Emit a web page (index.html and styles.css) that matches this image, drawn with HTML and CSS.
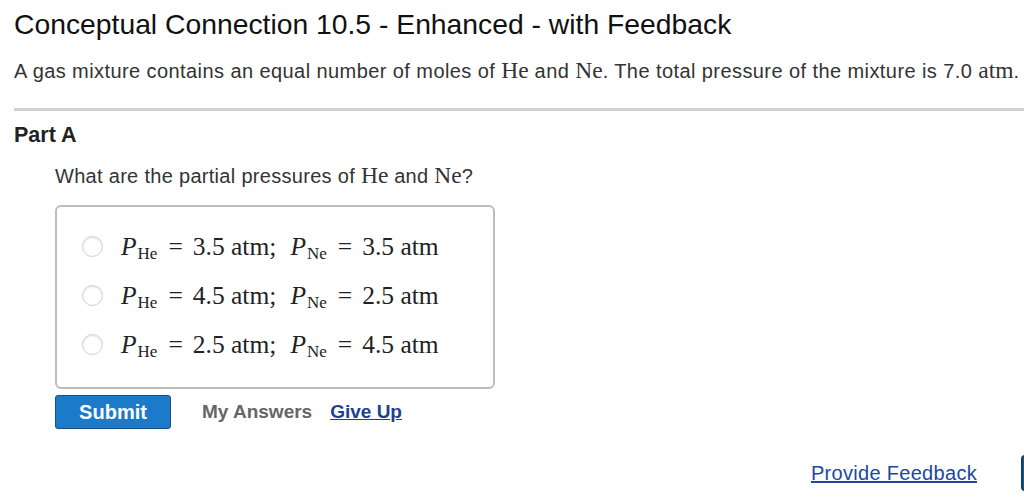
FILE: index.html
```html
<!DOCTYPE html>
<html>
<head>
<meta charset="utf-8">
<link rel="stylesheet" href="styles.css">
</head>
<body>
<div class="page">
  <h1 class="title">Conceptual Connection 10.5 - Enhanced - with Feedback</h1>
  <p class="intro">A gas mixture contains an equal number of moles of <span class="m">He</span> and <span class="m">Ne</span>. The total pressure of the mixture is 7.0 <span class="m">atm</span>.</p>
  <hr class="rule">
  <h2 class="part">Part A</h2>
  <div class="question">
    <p class="prompt">What are the partial pressures of <span class="m">He</span> and <span class="m">Ne</span>?</p>
    <div class="choices">
      <label class="choice"><span class="radio"></span><span class="eq"><i>P</i><sub>He</sub><span class="op">=</span>3.5 atm;<span class="sp"></span><i>P</i><sub>Ne</sub><span class="op">=</span>3.5 atm</span></label>
      <label class="choice"><span class="radio"></span><span class="eq"><i>P</i><sub>He</sub><span class="op">=</span>4.5 atm;<span class="sp"></span><i>P</i><sub>Ne</sub><span class="op">=</span>2.5 atm</span></label>
      <label class="choice"><span class="radio"></span><span class="eq"><i>P</i><sub>He</sub><span class="op">=</span>2.5 atm;<span class="sp"></span><i>P</i><sub>Ne</sub><span class="op">=</span>4.5 atm</span></label>
    </div>
    <div class="actions">
      <button class="submit">Submit</button>
      <span class="my-answers">My Answers</span>
      <a class="give-up" href="#">Give Up</a>
    </div>
  </div>
  <div class="footer">
    <a class="feedback" href="#">Provide Feedback</a>
    <button class="next" aria-label="Continue"></button>
  </div>
</div>
</body>
</html>
```
FILE: styles.css
```css
html, body {
  margin: 0;
  padding: 0;
  background: #fff;
  overflow: hidden;
}
.page {
  width: 1024px;
  height: 498px;
  font-family: "Liberation Sans", Arial, sans-serif;
  color: #333;
  padding-left: 14px;
  box-sizing: border-box;
  overflow: hidden;
}
.title {
  margin: 0;
  padding-top: 6px;
  font-size: 28.3px;
  font-weight: normal;
  color: #111;
  line-height: 36px;
  white-space: nowrap;
}
.intro {
  margin: 16px 0 0;
  font-size: 20px;
  letter-spacing: 0.42px;
  line-height: 24px;
  white-space: nowrap;
}
.m {
  font-family: "Liberation Serif", "Times New Roman", serif;
  font-size: 23.5px;
  letter-spacing: 0;
}
.rule {
  margin: 25px 0 0;
  border: 0;
  height: 3px;
  background: #d0d0d0;
}
.part {
  margin: 11px 0 0;
  font-size: 21.5px;
  font-weight: bold;
  color: #222;
  line-height: 26px;
}
.question {
  padding-left: 41px;
}
.prompt {
  margin: 15px 0 0;
  font-size: 20px;
  letter-spacing: 0.3px;
  line-height: 24px;
  color: #333;
}
.choices {
  margin-top: 17px;
  width: 440px;
  height: 184px;
  border: 2px solid #bdbdbd;
  border-radius: 6px;
  display: flex;
  flex-direction: column;
  padding: 26px 0 0 25px;
  box-sizing: border-box;
  gap: 22px;
}
.choice {
  display: flex;
  align-items: center;
  gap: 18px;
  height: 27px;
}
.radio {
  width: 19px;
  height: 19px;
  border-radius: 50%;
  border: 1px solid #cfcfcf;
  box-shadow: inset 0 1px 2px rgba(0,0,0,0.12);
  background: #fff;
  flex: none;
}
.eq {
  font-family: "Liberation Serif", "Times New Roman", serif;
  font-size: 25.5px;
  color: #222;
  white-space: nowrap;
  display: flex;
  align-items: baseline;
}
.eq i {
  margin-right: 1px;
}
.eq sub {
  font-size: 17px;
  position: relative;
  top: 4px;
  vertical-align: baseline;
  line-height: 0;
}
.op {
  padding: 0 10px 0 11px;
}
.sp {
  display: inline-block;
  width: 14px;
}
.actions {
  margin-top: 6px;
  display: flex;
  align-items: center;
}
.submit {
  width: 116px;
  height: 34px;
  background: #1b7ac9;
  border: 1px solid #14508a;
  border-radius: 3px;
  color: #fff;
  font-family: "Liberation Sans", Arial, sans-serif;
  font-weight: bold;
  font-size: 20px;
  padding: 0;
}
.my-answers {
  margin-left: 31px;
  font-size: 19px;
  font-weight: bold;
  color: #666;
}
.give-up {
  margin-left: 18px;
  font-size: 19px;
  font-weight: bold;
  color: #1c3f95;
}
.footer {
  margin-top: 26px;
  display: flex;
  justify-content: flex-end;
  align-items: center;
  gap: 44px;
  margin-right: -57px;
}
.feedback {
  font-size: 20px;
  letter-spacing: 0.3px;
  color: #1d47a0;
}
.next {
  width: 60px;
  height: 36px;
  background: #1b5a99;
  border: 2px solid #143e6a;
  border-radius: 4px;
  padding: 0;
}
```
